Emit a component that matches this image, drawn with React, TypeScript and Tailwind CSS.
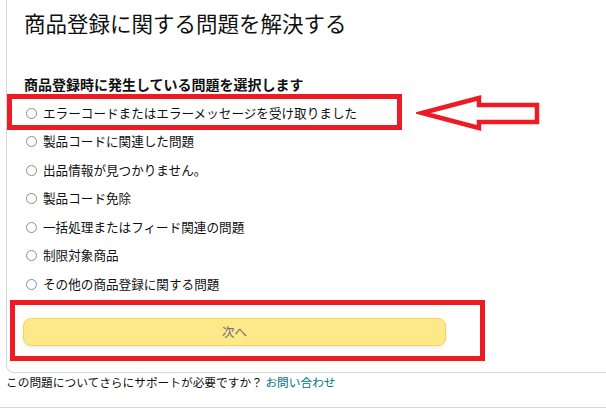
const OPTIONS = [
  'エラーコードまたはエラーメッセージを受け取りました',
  '製品コードに関連した問題',
  '出品情報が見つかりません。',
  '製品コード免除',
  '一括処理またはフィード関連の問題',
  '制限対象商品',
  'その他の商品登録に関する問題',
]

const FONT = "font-['Noto_Sans_CJK_JP','Noto_Sans',sans-serif]"

function RadioRow({ label }: { label: string }) {
  return (
    <label className="flex h-[28.5px] items-center">
      <span className="ml-[2px] h-[11px] w-[11px] shrink-0 rounded-full border border-[#8d8d8d] bg-white" />
      <span className="ml-[6px] text-[12.6px] leading-none text-[#0f1111]">{label}</span>
    </label>
  )
}

function Arrow() {
  return (
    <svg className="absolute left-[416px] top-[93px]" width="126" height="40" viewBox="416 93 126 40">
      <polygon points="422,113 479,98 479,105 537,105 537,122 479,122 479,128" fill="none" stroke="#ED1C24" strokeWidth="4.5" strokeLinejoin="miter" />
    </svg>
  )
}

export default function App() {
  return (
    <div className={`relative h-[410px] w-[606px] overflow-hidden bg-white ${FONT}`}>
      <div className="ml-[6px] h-[373px] rounded-bl-[8px] border-b border-l border-[#d5d9d9] pl-[17px]">
        <h1 className="pt-[9px] text-[21.5px] font-normal leading-[28px] text-[#0f1111]">商品登録に関する問題を解決する</h1>
        <p className="mt-[37px] text-[14px] font-bold leading-[20px] text-[#0f1111]">商品登録時に発生している問題を選択します</p>
        <div className="mt-[4.75px] flex flex-col">
          {OPTIONS.map((option) => (
            <RadioRow key={option} label={option} />
          ))}
        </div>
        <button className="mt-[20px] -ml-px flex h-[28px] w-[423px] items-center justify-center rounded-[8px] border border-[#f5d74f] bg-[#fee98a] text-[12.5px] text-[#6f6f6f] shadow-[0_2px_4px_rgba(0,0,0,0.08)]">次へ</button>
      </div>
      <p className="pl-[6px] text-[11.7px] leading-[18px] text-[#0f1111]">
        この問題についてさらにサポートが必要ですか？ <span className="text-[#007185]">お問い合わせ</span>
      </p>
      <div className="mt-[16px] h-px w-full bg-[#d5d9d9]" />

      <div className="absolute left-[7px] top-[94px] h-[36px] w-[395px] border-[5px] border-[#ED1C24]" />
      <div className="absolute left-[10px] top-[300px] h-[61px] w-[475px] border-[5px] border-[#ED1C24]" />
      <Arrow />
    </div>
  )
}
